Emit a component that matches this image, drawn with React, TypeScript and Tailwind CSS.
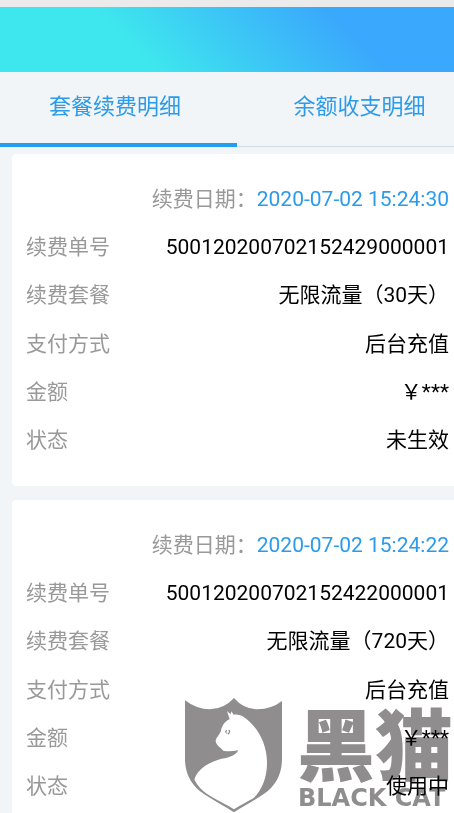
const records = [
  {
    date: '2020-07-02 15:24:30',
    rows: [
      ['续费单号', '500120200702152429000001'],
      ['续费套餐', '无限流量（30天）'],
      ['支付方式', '后台充值'],
      ['金额', '￥***'],
      ['状态', '未生效'],
    ],
  },
  {
    date: '2020-07-02 15:24:22',
    rows: [
      ['续费单号', '500120200702152422000001'],
      ['续费套餐', '无限流量（720天）'],
      ['支付方式', '后台充值'],
      ['金额', '￥***'],
      ['状态', '使用中'],
    ],
  },
];

function RecordCard({ date, rows }: { date: string; rows: string[][] }) {
  return (
    <dl className="flex min-h-[332px] shrink-0 flex-col rounded-l-[4px] bg-white pt-[21px] pr-[5px] pb-[22px] pl-[14px] text-[21px] leading-6">
      <div className="flex flex-1 items-center justify-end whitespace-nowrap">
        <dt className="text-[#999]">续费日期：</dt>
        <dd className="text-[#2b9bea]">{date}</dd>
      </div>
      {rows.map(([label, value]) => (
        <div key={label} className="flex flex-1 items-center justify-between whitespace-nowrap">
          <dt className="text-[#999]">{label}</dt>
          <dd className="text-black">{value}</dd>
        </div>
      ))}
    </dl>
  );
}

function Watermark() {
  return (
    <div className="pointer-events-none absolute right-0 bottom-0 flex h-[123px] mix-blend-multiply">
      <svg viewBox="0 0 330 369" className="h-[123px] w-[110px]" aria-hidden="true">
        <path
          fill="#8f8d8e"
          d="M15 31Q50 58 90 58Q132 57 162 24Q190 57 232 58Q275 57 306 33V210C305 255 285 290 250 313C225 330 192 348 162 367C132 348 98 330 73 313C36 288 16 255 15 210Z"
        />
        <path
          fill="#fff"
          d="M141 63L149 88C134 94 125 108 122 125C117 136 107 144 107 153C108 166 121 172 130 182C145 186 160 183 175 181C165 200 142 203 115 209C78 220 50 243 43 269C52 286 64 300 80 311C105 327 135 341 162 358C182 346 202 335 220 325C247 300 262 260 261 215C260 160 232 108 190 80C178 74 168 73 161 74L154 64L152 73Z"
        />
        <path fill="#8f8d8e" d="M135 123Q138 120 142 120L139 126L143 133Q136 132 135 123ZM145 119L151 121Q151 130 145 134L143 130L147 126Z" />
      </svg>
      <div className="flex w-[164px] flex-col pl-[7px] text-[#8f8d8e]">
        <span className="mt-[19px] h-[77px] text-[78px] leading-[80px] font-black whitespace-nowrap">黑猫</span>
        <span className="pl-px font-['DejaVu_Sans',sans-serif] text-[24px] leading-6 font-bold whitespace-nowrap">BLACK CAT</span>
      </div>
    </div>
  );
}

export default function App() {
  return (
    <div className="relative h-screen overflow-hidden bg-[#f1f5f8] font-[Roboto,'Noto_Sans_CJK_SC',sans-serif]">
      <div className="flex h-full flex-col overflow-y-auto [scrollbar-width:none]">
        <div className="h-[7px] shrink-0 bg-[#ebebeb]" />
        <header className="h-[65px] shrink-0 bg-[linear-gradient(45deg,#3ee6ee_31%,#3aa8fc_75%)]" />
        <nav className="flex h-[75px] shrink-0 text-[22px] text-[#2b9bea]">
          <button type="button" className="w-[237px] border-b-4 border-[#259df0] pr-[7px] pb-[2px]">
            套餐续费明细
          </button>
          <button type="button" className="flex-1 border-b border-[#d3dbe2] pb-[5px] pl-7 whitespace-nowrap">
            余额收支明细
          </button>
        </nav>
        <main className="flex flex-col gap-[14px] pt-[7px] pl-3">
          {records.map((record) => (
            <RecordCard key={record.date} date={record.date} rows={record.rows} />
          ))}
        </main>
      </div>
      <Watermark />
    </div>
  );
}
